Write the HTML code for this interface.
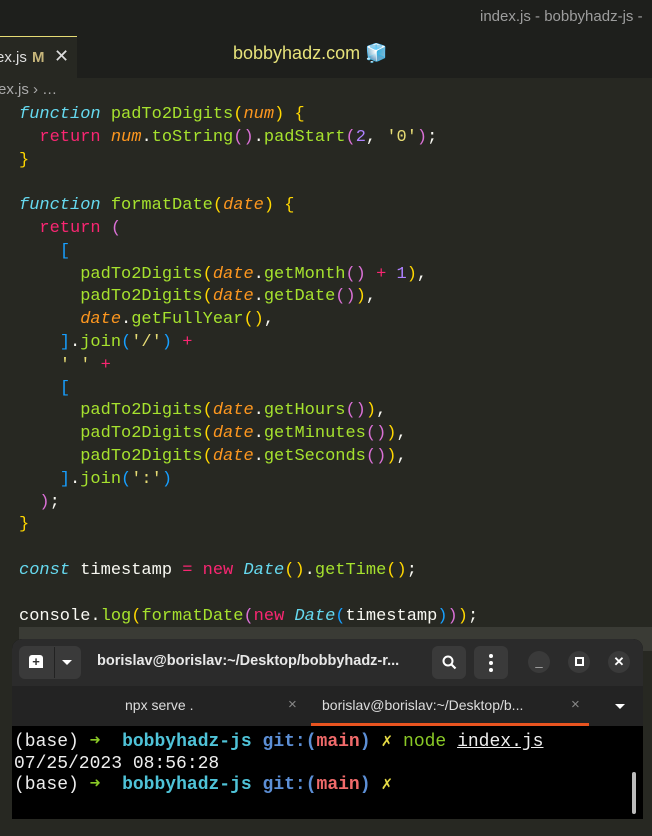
<!DOCTYPE html>
<html><head><meta charset="utf-8"><style>
*{margin:0;padding:0;box-sizing:border-box}
body{width:652px;height:836px;overflow:hidden;background:#272822;font-family:"Liberation Sans",sans-serif;position:relative}
.title{position:absolute;left:0;top:0;width:652px;height:36px;background:#1e1f1c;color:#9d9d9d;font-size:15px}
.title span{position:absolute;left:480px;top:8px;white-space:nowrap}
.tabs{position:absolute;left:0;top:36px;width:652px;height:42px;background:#1e1f1c}
.atab{position:absolute;left:0;top:0;width:77px;height:42px;background:#272822;border-top:1px solid #e6db74;color:#ddd;font-size:15px}
.atab .n{position:absolute;left:-4px;top:12px}
.atab .m{position:absolute;left:32px;top:12px;color:#c6b57a;font-weight:bold}
.atab .x{position:absolute;left:54px;top:9px;font-size:18px}
.brand{position:absolute;left:233px;top:43px;color:#e6e27a;font-size:18px}
.crumb{position:absolute;left:-2px;top:81px;color:#aaa;font-size:15px}
.code{position:absolute;left:19px;top:104px;font-family:"Liberation Mono",monospace;font-size:17px;line-height:22.8px;color:#f8f8f2;white-space:pre}
.k{color:#66d9ef;font-style:italic}.f{color:#a6e22e}.p{color:#fd971f;font-style:italic}.r{color:#f92672}
.y{color:#ffd700}.v{color:#da70d6}.b{color:#179fff}.s{color:#e6db74}.nm{color:#ae81ff}
.hl{position:absolute;left:19px;top:627px;width:633px;height:24px;background:#3a3b35}
.term{position:absolute;left:12px;top:639px;width:631px;height:180px;background:#000;border-radius:10px 10px 0 0;overflow:hidden}
.th{position:absolute;left:0;top:0;width:631px;height:47px;background:#2b2b2b}
.tt{position:absolute;left:0;top:47px;width:631px;height:40px;background:#232323}
.btn{position:absolute;background:#3a3a3a;border-radius:6px}
.circ{position:absolute;width:22px;height:22px;border-radius:50%;background:#3a3a3a;color:#fff;text-align:center;font-size:13px;line-height:22px;font-weight:bold}
.ttl{position:absolute;left:85px;top:14px;color:#e8e8e8;font-size:14.5px;font-weight:bold}
.tab1{position:absolute;left:113px;top:11px;color:#ddd;font-size:14px}
.tab2{position:absolute;left:310px;top:11px;color:#ddd;font-size:14px}
.tx{position:absolute;color:#888;font-size:15px}
.ul{position:absolute;left:299px;top:37px;width:278px;height:3px;background:#e95420}
.out{position:absolute;left:2px;top:93px;font-family:"Liberation Mono",monospace;font-size:18px;line-height:21.7px;color:#eee;white-space:pre}
.g{color:#8ac926}.c{color:#4fc3d8;font-weight:bold}.gb{color:#5c8fd6;font-weight:bold}.rd{color:#f06a6a;font-weight:bold}.yx{color:#e6db45}.ng{color:#8ac926}
</style></head><body>
<div class="title"><span>index.js - bobbyhadz-js - </span></div>
<div class="tabs"><div class="atab"><span class="n">ex.js</span><span class="m">M</span><span class="x">✕</span></div></div>
<div class="brand">bobbyhadz.com 🧊</div>
<div class="crumb">ex.js › …</div>
<div class="hl"></div>
<div class="code"><span class="k">function</span> <span class="f">padTo2Digits</span><span class="y">(</span><span class="p">num</span><span class="y">)</span> <span class="y">{</span>
  <span class="r">return</span> <span class="p">num</span>.<span class="f">toString</span><span class="v">()</span>.<span class="f">padStart</span><span class="v">(</span><span class="nm">2</span>, <span class="s">'0'</span><span class="v">)</span>;
<span class="y">}</span>

<span class="k">function</span> <span class="f">formatDate</span><span class="y">(</span><span class="p">date</span><span class="y">)</span> <span class="y">{</span>
  <span class="r">return</span> <span class="v">(</span>
    <span class="b">[</span>
      <span class="f">padTo2Digits</span><span class="y">(</span><span class="p">date</span>.<span class="f">getMonth</span><span class="v">()</span> <span class="r">+</span> <span class="nm">1</span><span class="y">)</span>,
      <span class="f">padTo2Digits</span><span class="y">(</span><span class="p">date</span>.<span class="f">getDate</span><span class="v">()</span><span class="y">)</span>,
      <span class="p">date</span>.<span class="f">getFullYear</span><span class="y">()</span>,
    <span class="b">]</span>.<span class="f">join</span><span class="b">(</span><span class="s">'/'</span><span class="b">)</span> <span class="r">+</span>
    <span class="s">' '</span> <span class="r">+</span>
    <span class="b">[</span>
      <span class="f">padTo2Digits</span><span class="y">(</span><span class="p">date</span>.<span class="f">getHours</span><span class="v">()</span><span class="y">)</span>,
      <span class="f">padTo2Digits</span><span class="y">(</span><span class="p">date</span>.<span class="f">getMinutes</span><span class="v">()</span><span class="y">)</span>,
      <span class="f">padTo2Digits</span><span class="y">(</span><span class="p">date</span>.<span class="f">getSeconds</span><span class="v">()</span><span class="y">)</span>,
    <span class="b">]</span>.<span class="f">join</span><span class="b">(</span><span class="s">':'</span><span class="b">)</span>
  <span class="v">)</span>;
<span class="y">}</span>

<span class="k">const</span> timestamp <span class="r">=</span> <span class="r">new</span> <span class="k">Date</span><span class="y">()</span>.<span class="f">getTime</span><span class="y">()</span>;

console.<span class="f">log</span><span class="y">(</span><span class="f">formatDate</span><span class="v">(</span><span class="r">new</span> <span class="k">Date</span><span class="b">(</span>timestamp<span class="b">)</span><span class="v">)</span><span class="y">)</span>;</div>
<div class="term">
 <div class="th">
  <div class="btn" style="left:7px;top:7px;width:62px;height:33px"></div>
  <div style="position:absolute;left:42px;top:8px;width:1px;height:31px;background:#222"></div>
  <div style="position:absolute;left:17px;top:16px;width:14px;height:13px;background:#fff;border-radius:3px 3px 0 0;color:#333;font-size:13px;line-height:13px;text-align:center;font-weight:bold">+</div>
  <div style="position:absolute;left:50px;top:21px;border-left:5px solid transparent;border-right:5px solid transparent;border-top:5px solid #fff"></div>
  <div class="ttl">borislav@borislav:~/Desktop/bobbyhadz-r...</div>
  <div class="btn" style="left:420px;top:7px;width:34px;height:33px"></div>
  <svg style="position:absolute;left:429px;top:15px" width="17" height="17" viewBox="0 0 17 17"><circle cx="7" cy="7" r="4.5" fill="none" stroke="#fff" stroke-width="2"/><line x1="10.5" y1="10.5" x2="14.5" y2="14.5" stroke="#fff" stroke-width="2.2"/></svg>
  <div class="btn" style="left:462px;top:7px;width:34px;height:33px"></div>
  <div style="position:absolute;left:477px;top:15px;width:4px;height:4px;border-radius:2px;background:#fff;box-shadow:0 7px 0 #fff,0 14px 0 #fff"></div>
  <div class="circ" style="left:516px;top:12px">_</div>
  <div class="circ" style="left:556px;top:12px"><div style="width:9px;height:9px;border:2px solid #fff;margin:6px auto"></div></div>
  <div class="circ" style="left:596px;top:12px">✕</div>
 </div>
 <div class="tt">
  <div class="tab1">npx serve .</div><div class="tx" style="left:276px;top:10px">×</div>
  <div class="tab2">borislav@borislav:~/Desktop/b...</div><div class="tx" style="left:559px;top:10px">×</div>
  <div style="position:absolute;left:603px;top:18px;border-left:5px solid transparent;border-right:5px solid transparent;border-top:5px solid #fff"></div>
  <div class="ul"></div>
 </div>
 <div class="out">(base) <span class="g">➜</span>  <span class="c">bobbyhadz-js</span> <span class="gb">git:(</span><span class="rd">main</span><span class="gb">)</span> <span class="yx">✗</span> <span class="ng">node</span> <u>index.js</u>
07/25/2023 08:56:28
(base) <span class="g">➜</span>  <span class="c">bobbyhadz-js</span> <span class="gb">git:(</span><span class="rd">main</span><span class="gb">)</span> <span class="yx">✗</span></div>
 <div style="position:absolute;left:620px;top:133px;width:4px;height:42px;background:#bbb;border-radius:2px"></div>
</div>
</body></html>
